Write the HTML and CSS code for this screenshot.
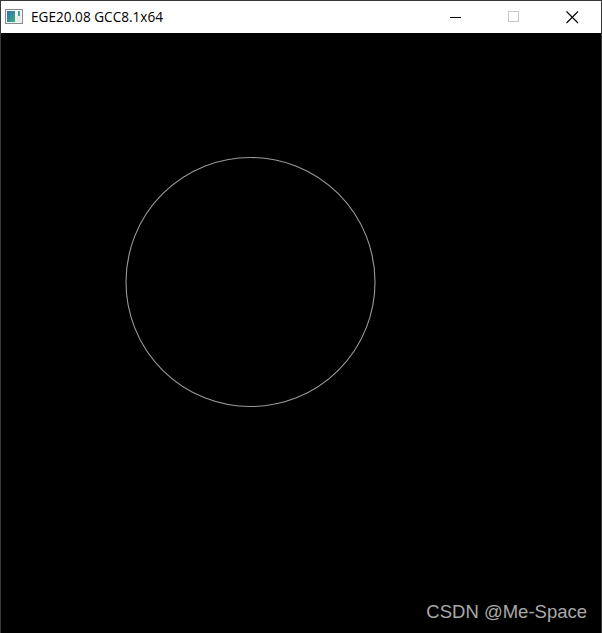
FILE: index.html
```html
<!DOCTYPE html>
<html>
<head>
<meta charset="utf-8">
<link rel="stylesheet" href="styles.css">
</head>
<body>
<div class="window">
  <div class="titlebar">
    <svg class="app-icon" width="18" height="15" viewBox="0 0 18 15">
      <defs>
        <linearGradient id="g" x1="0" y1="0" x2="1" y2="1">
          <stop offset="0" stop-color="#2f6fb0"/>
          <stop offset="1" stop-color="#3fb07a"/>
        </linearGradient>
      </defs>
      <rect x="0.5" y="0.5" width="17" height="14" fill="#f4f4f4" stroke="#8a8a8a"/>
      <rect x="2" y="2" width="8" height="11" fill="url(#g)"/>
      <rect x="13" y="2" width="2" height="5" fill="#4aa39a"/>
      <rect x="10" y="7" width="6" height="6" fill="#e8eeee"/>
    </svg>
    <span class="title">EGE20.08 GCC8.1x64</span>
    <div class="controls">
      <div class="btn"><svg width="12" height="12" viewBox="0 0 12 12"><line x1="0" y1="6.5" x2="11" y2="6.5" stroke="#000" stroke-width="1"/></svg></div>
      <div class="btn"><svg width="12" height="12" viewBox="0 0 12 12"><rect x="0.5" y="0.5" width="10" height="10" fill="none" stroke="#c8c8c8" stroke-width="1"/></svg></div>
      <div class="btn"><svg width="13" height="13" viewBox="0 0 13 13"><path d="M0.5 0.5 L12 12 M12 0.5 L0.5 12" stroke="#000" stroke-width="1.1" fill="none"/></svg></div>
    </div>
  </div>
  <div class="client">
    <svg class="canvas" width="600" height="600" viewBox="0 0 600 600">
      <circle cx="249.5" cy="249" r="124.5" fill="none" stroke="#9a9a9a" stroke-width="1.1"/>
    </svg>
    <div class="watermark">CSDN @Me-Space</div>
  </div>
</div>
</body>
</html>
```

FILE: styles.css
```css
html, body {
  margin: 0;
  padding: 0;
  background: #000;
}
.window {
  width: 600px;
  height: 632px;
  border: 1px solid #3a3a3a;
  border-bottom: none;
  display: flex;
  flex-direction: column;
  background: #000;
}
.titlebar {
  height: 32px;
  background: #fff;
  display: flex;
  align-items: center;
  flex-shrink: 0;
}
.app-icon {
  margin-left: 4px;
  margin-top: -1px;
  flex-shrink: 0;
}
.title {
  margin-left: 8px;
  font-family: "Open Sans", "DejaVu Sans", sans-serif;
  font-size: 13.6px;
  color: #000;
  flex: 1;
  margin-top: -1px;
}
.controls {
  display: flex;
  height: 32px;
}
.btn {
  width: 58px;
  display: flex;
  align-items: center;
  justify-content: center;
}
.btn svg { display: block; }
.client {
  position: relative;
  height: 600px;
  background: #000;
}
.canvas {
  display: block;
}
.watermark {
  position: absolute;
  right: 14px;
  bottom: 10px;
  font-family: "Liberation Sans", Arial, sans-serif;
  font-size: 18.5px;
  color: #a9a9a9;
}
```
